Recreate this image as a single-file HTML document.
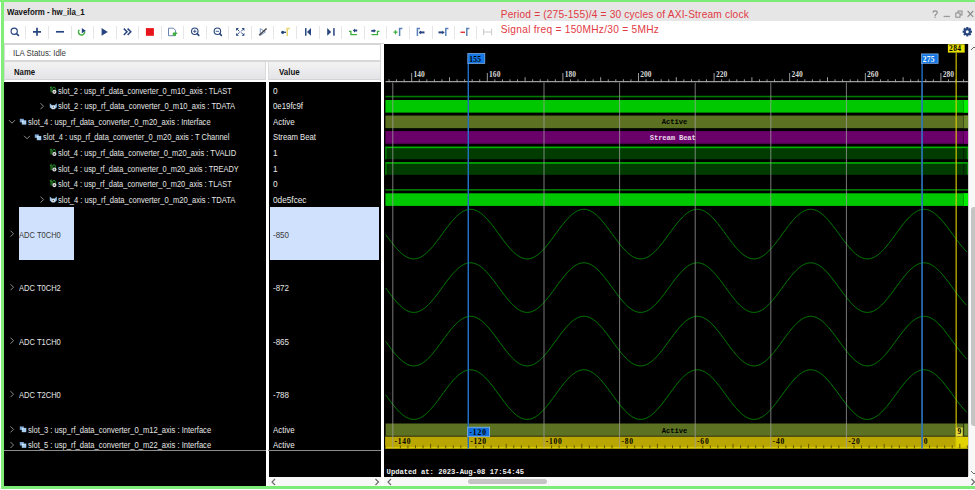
<!DOCTYPE html><html><head><meta charset="utf-8"><style>
*{margin:0;padding:0;box-sizing:border-box}
html,body{width:975px;height:490px;overflow:hidden;background:#fff;position:relative;font-family:"Liberation Sans",sans-serif}
.a{position:absolute}
.t{position:absolute;white-space:nowrap;line-height:1}
.nm{position:absolute;white-space:nowrap;line-height:1;color:#e6e6e6;font-size:7.9px;letter-spacing:-0.25px;word-spacing:-1px}
.vl{position:absolute;white-space:nowrap;line-height:1;color:#ececec;font-size:7.9px}
.mono{font-family:"Liberation Mono",monospace;font-weight:bold}
.sep{position:absolute;top:25.5px;width:1px;height:13px;background:#e6e6e6}
</style></head><body>
<div class="a" style="left:0;top:0;width:975px;height:2.1px;background:#7dec76"></div>
<div class="a" style="left:0.9px;top:0;width:3.1px;height:489px;background:#80ee78"></div>
<div class="a" style="left:0.9px;top:486px;width:975px;height:2.6px;background:#7dec76"></div>
<div class="a" style="left:4px;top:2.1px;width:971px;height:18.9px;background:#e6e6e6"></div>
<svg class="a" style="left:930px;top:9px" width="45" height="10" viewBox="0 0 45 10">
<path d="M2.9 3.6 Q3 1.9 5.1 1.9 Q7.2 1.9 7.2 3.7 Q7.2 4.9 5.8 5.5 Q5.1 5.9 5.1 6.9" fill="none" stroke="#8a8a8a" stroke-width="1.1"/><rect x="4.5" y="7.6" width="1.2" height="1.2" fill="#8a8a8a"/>
<rect x="13.6" y="6.8" width="6.4" height="1.3" fill="#9a9a9a"/>
<rect x="28" y="2" width="4" height="4" fill="none" stroke="#8a8a8a" stroke-width="1"/>
<rect x="25.8" y="4" width="4.2" height="4.2" fill="#e6e6e6" stroke="#8a8a8a" stroke-width="1"/>
<path d="M37.6 2 L43.2 7.8 M43.2 2 L37.6 7.8" stroke="#8a8a8a" stroke-width="1.1"/>
</svg>
<div class="sep" style="left:25.3px"></div>
<div class="sep" style="left:48.1px"></div>
<div class="sep" style="left:70.6px"></div>
<div class="sep" style="left:93.3px"></div>
<div class="sep" style="left:115.8px"></div>
<div class="sep" style="left:138.1px"></div>
<div class="sep" style="left:160.9px"></div>
<div class="sep" style="left:183.3px"></div>
<div class="sep" style="left:206.1px"></div>
<div class="sep" style="left:228.4px"></div>
<div class="sep" style="left:251.3px"></div>
<div class="sep" style="left:273.4px"></div>
<div class="sep" style="left:296.1px"></div>
<div class="sep" style="left:318.9px"></div>
<div class="sep" style="left:341.4px"></div>
<div class="sep" style="left:364.0px"></div>
<div class="sep" style="left:386.2px"></div>
<div class="sep" style="left:408.8px"></div>
<div class="sep" style="left:431.5px"></div>
<div class="sep" style="left:453.7px"></div>
<div class="sep" style="left:476.0px"></div>
<div class="a" style="left:4px;top:43px;width:380px;height:1.9px;background:#d6d6d6"></div>
<svg class="a" style="left:0;top:0" width="975" height="45"><circle cx="14.2" cy="31.2" r="3.1" fill="none" stroke="#27457f" stroke-width="1.15"/><path d="M16.4 33.5 L18.4 35.4" stroke="#27457f" stroke-width="1.7" stroke-linecap="round"/><path d="M33 31.8 H41 M37 27.8 V35.8" stroke="#27457f" stroke-width="1.7"/><path d="M56 31.8 H64" stroke="#27457f" stroke-width="1.7"/><path d="M79.3 29.8 A3.1 3.1 0 1 0 84.6 31.4" fill="none" stroke="#3cae3c" stroke-width="1.4"/><path d="M81.8 28 L85.8 30.7 L81.8 33.3 Z" fill="#27457f"/><path d="M101.6 28.1 L107.8 31.9 L101.6 35.7 Z" fill="#27457f"/><path d="M123.8 28.6 L127 31.8 L123.8 35 M127.6 28.6 L130.8 31.8 L127.6 35" fill="none" stroke="#27457f" stroke-width="1.5"/><rect x="145.9" y="28.1" width="8" height="7.7" fill="#e8141c"/><path d="M168.5 28.2 H173.5 L175.5 30.3 V35.7 H168.5 Z" fill="none" stroke="#5a78a8" stroke-width="0.9"/><path d="M172.5 34.3 L174.3 32.8 H176.6 L175.6 31.8 L177.6 33.3 L175.6 34.9 L176.6 34 H174.3 Z" fill="#3cae3c"/><rect x="172.8" y="32.6" width="3.2" height="3" fill="#3cae3c"/><circle cx="194.8" cy="31.3" r="3.25" fill="none" stroke="#27457f" stroke-width="1.1"/><path d="M193.1 31.3 H196.5 M194.8 29.6 V33" stroke="#27457f" stroke-width="0.85"/><path d="M197.2 33.7 L198.8 35.4" stroke="#27457f" stroke-width="1.6" stroke-linecap="round"/><circle cx="217.4" cy="31.3" r="3.25" fill="none" stroke="#27457f" stroke-width="1.1"/><path d="M215.7 31.3 H219.1" stroke="#27457f" stroke-width="0.85"/><path d="M219.8 33.7 L221.4 35.4" stroke="#27457f" stroke-width="1.6" stroke-linecap="round"/><path d="M237.2 29.2 L239.4 31.4 M243.3 29.2 L241.1 31.4 M237.2 34.6 L239.4 32.4 M243.3 34.6 L241.1 32.4" stroke="#27457f" stroke-width="1"/><path d="M236.1 28.1 H238.9 L236.1 30.9 Z M244.4 28.1 H241.6 L244.4 30.9 Z M236.1 35.7 H238.9 L236.1 32.9 Z M244.4 35.7 H241.6 L244.4 32.9 Z" fill="#27457f"/><path d="M260.3 28.6 L265.4 32 L260.3 35.4 Z" fill="none" stroke="#6f8fc0" stroke-width="0.9"/><path d="M259.2 35.3 L266.6 28.5" stroke="#444" stroke-width="1.4"/><circle cx="282.7" cy="32.3" r="1.6" fill="#27457f"/><path d="M283.5 32.3 H286" stroke="#27457f" stroke-width="1.3"/><path d="M287.2 36 V28.6 H289.8" fill="none" stroke="#e8d36a" stroke-width="1.5"/><rect x="305" y="28.1" width="1.5" height="7.6" fill="#27457f"/><path d="M311 28.1 L307 31.9 L311 35.7 Z" fill="#27457f"/><rect x="333.2" y="28.1" width="1.5" height="7.6" fill="#27457f"/><path d="M327.2 28.1 L331.2 31.9 L327.2 35.7 Z" fill="#27457f"/><path d="M349 31.3 H350.9 V34.7 H356.9" fill="none" stroke="#3cae3c" stroke-width="1.3"/><path d="M352.8 30.5 L355 28.6 V32.4 Z" fill="#27457f"/><rect x="354.5" y="29.6" width="2.7" height="1.9" fill="#27457f"/><path d="M371.5 34.7 H377.5 V31.3 H379.5" fill="none" stroke="#3cae3c" stroke-width="1.3"/><rect x="371.3" y="29.9" width="2.8" height="1.9" fill="#27457f"/><path d="M373.8 28.9 L376 30.85 L373.8 32.8 Z" fill="#27457f"/><path d="M393.5 32.2 H397.5 M395.5 30.2 V34.2" stroke="#3cae3c" stroke-width="1.3"/><path d="M399.6 36 V28.5 H402.4" fill="none" stroke="#5a82b8" stroke-width="1.5"/><path d="M417.4 36 V28.5 H420" fill="none" stroke="#5a82b8" stroke-width="1.5"/><path d="M419.5 32.4 H424.5" stroke="#27457f" stroke-width="2"/><path d="M421 30.6 L418.8 32.4 L421 34.2Z" fill="#27457f"/><path d="M438.5 32.4 H443" stroke="#27457f" stroke-width="2"/><path d="M442.4 30.6 L444.6 32.4 L442.4 34.2Z" fill="#27457f"/><path d="M445.8 36 V28.5 H448.4" fill="none" stroke="#5a82b8" stroke-width="1.5"/><path d="M460.5 32.3 H465" stroke="#e23a3a" stroke-width="1.5"/><path d="M466.8 36 V28.5 H469.4" fill="none" stroke="#5a82b8" stroke-width="1.5"/><path d="M483.6 28.8 V35.2 M491.6 28.8 V35.2 M483.6 32 H491.6" stroke="#c8c8c8" stroke-width="1"/><rect x="969.80" y="30.60" width="2.2" height="2.2" fill="#27457f" transform="rotate(0 970.90 31.70)"/><rect x="968.75" y="33.15" width="2.2" height="2.2" fill="#27457f" transform="rotate(45 969.85 34.25)"/><rect x="966.20" y="34.20" width="2.2" height="2.2" fill="#27457f" transform="rotate(90 967.30 35.30)"/><rect x="963.65" y="33.15" width="2.2" height="2.2" fill="#27457f" transform="rotate(135 964.75 34.25)"/><rect x="962.60" y="30.60" width="2.2" height="2.2" fill="#27457f" transform="rotate(180 963.70 31.70)"/><rect x="963.65" y="28.05" width="2.2" height="2.2" fill="#27457f" transform="rotate(225 964.75 29.15)"/><rect x="966.20" y="27.00" width="2.2" height="2.2" fill="#27457f" transform="rotate(270 967.30 28.10)"/><rect x="968.75" y="28.05" width="2.2" height="2.2" fill="#27457f" transform="rotate(315 969.85 29.15)"/><circle cx="967.3" cy="31.7" r="2.5" fill="none" stroke="#27457f" stroke-width="2"/></svg>
<div class="a" style="left:4px;top:44.9px;width:377px;height:14.8px;background:#fff"></div>
<div class="a" style="left:4px;top:59.7px;width:377px;height:2px;background:#d8d8d8"></div>
<div class="a" style="left:4px;top:61.7px;width:376.5px;height:18.7px;background:linear-gradient(#f3f3f3,#e4e4e8);border-bottom:0.8px solid #d4d4d4"></div>
<div class="a" style="left:265px;top:61.7px;width:0.8px;height:18.7px;background:#dadada"></div>
<div class="a" style="left:265.8px;top:61.7px;width:2.6px;height:19.3px;background:#fff"></div>
<div class="a" style="left:268.4px;top:61.7px;width:0.9px;height:18.7px;background:#dcdcdc"></div>
<div class="a" style="left:380px;top:44.6px;width:0.9px;height:36px;background:#d8d8d8"></div>
<div class="a" style="left:4.1px;top:44.6px;width:0.9px;height:36px;background:#d8d8d8"></div>
<div class="a" style="left:4px;top:81.5px;width:261.6px;height:404.5px;background:#000"></div>
<div class="a" style="left:268.6px;top:81.5px;width:112.2px;height:395.1px;background:#000"></div>
<div class="a" style="left:268.4px;top:476.6px;width:112.6px;height:9.4px;background:#f8f8f8"></div>
<svg class="a" style="left:268px;top:476px" width="115" height="10"><path d="M7 3 L4 6 L7 9" fill="none" stroke="#666" stroke-width="1.1"/><path d="M107.5 3 L110.5 6 L107.5 9" fill="none" stroke="#666" stroke-width="1.1"/></svg>
<div class="a" style="left:381px;top:44px;width:3px;height:442px;background:#fff"></div>
<div class="a" style="left:19px;top:206.95px;width:55px;height:52.9px;background:#cfe1fc"></div>
<div class="a" style="left:270px;top:206.95px;width:109px;height:52.9px;background:#cfe1fc"></div>
<div class="a" style="left:4px;top:449.5px;width:261.8px;height:1px;background:#8c8c8c"></div>
<div class="a" style="left:268.4px;top:449.5px;width:112.6px;height:1px;background:#8c8c8c"></div>
<svg class="a" style="left:0;top:0" width="381" height="490"><path d="M50.1 87.9 L51.1 87.1 V92.3" fill="none" stroke="#2fa02f" stroke-width="1.1"/><rect x="52.7" y="87.2" width="2.6" height="3.6" rx="1.2" fill="none" stroke="#2fa02f" stroke-width="0.9"/><circle cx="54.4" cy="91.8" r="2.1" fill="#e6e6e6"/><circle cx="54.4" cy="91.8" r="0.9" fill="#666"/><path d="M40.5 103.2 L43.5 106.2 L40.5 109.2" fill="none" stroke="#9a9a9a" stroke-width="0.9"/><path d="M49.8 103.2 L52.0 105.2 H54.6 L56.8 103.2 V107.2 L54.6 109.2 H52.0 L49.8 107.2 Z" fill="#9cc4ea"/><circle cx="53.3" cy="107.2" r="1.7" fill="#e8e8e8"/><circle cx="53.3" cy="107.2" r="0.7" fill="#555"/><path d="M9.0 120.2 L12.0 123.2 L15.0 120.2" fill="none" stroke="#9a9a9a" stroke-width="0.9"/><rect x="19.8" y="118.8" width="4" height="3.5" fill="#7fa8d8"/><rect x="21.8" y="120.3" width="4.5" height="4.3" fill="#a9cdf0"/><rect x="22.1" y="120.8" width="1.2" height="1" fill="#fff"/><path d="M24.0 135.8 L27.0 138.8 L30.0 135.8" fill="none" stroke="#9a9a9a" stroke-width="0.9"/><rect x="34.8" y="134.4" width="4" height="3.5" fill="#7fa8d8"/><rect x="36.8" y="135.9" width="4.5" height="4.3" fill="#a9cdf0"/><rect x="37.1" y="136.4" width="1.2" height="1" fill="#fff"/><path d="M50.1 150.1 L51.1 149.3 V154.5" fill="none" stroke="#2fa02f" stroke-width="1.1"/><rect x="52.7" y="149.4" width="2.6" height="3.6" rx="1.2" fill="none" stroke="#2fa02f" stroke-width="0.9"/><circle cx="54.4" cy="154.0" r="2.1" fill="#e6e6e6"/><circle cx="54.4" cy="154.0" r="0.9" fill="#666"/><path d="M50.1 165.6 L51.1 164.8 V170.0" fill="none" stroke="#2fa02f" stroke-width="1.1"/><rect x="52.7" y="164.9" width="2.6" height="3.6" rx="1.2" fill="none" stroke="#2fa02f" stroke-width="0.9"/><circle cx="54.4" cy="169.5" r="2.1" fill="#e6e6e6"/><circle cx="54.4" cy="169.5" r="0.9" fill="#666"/><path d="M50.1 181.2 L51.1 180.4 V185.6" fill="none" stroke="#2fa02f" stroke-width="1.1"/><rect x="52.7" y="180.5" width="2.6" height="3.6" rx="1.2" fill="none" stroke="#2fa02f" stroke-width="0.9"/><circle cx="54.4" cy="185.1" r="2.1" fill="#e6e6e6"/><circle cx="54.4" cy="185.1" r="0.9" fill="#666"/><path d="M40.5 196.6 L43.5 199.6 L40.5 202.6" fill="none" stroke="#9a9a9a" stroke-width="0.9"/><path d="M49.8 196.6 L52.0 198.6 H54.6 L56.8 196.6 V200.6 L54.6 202.6 H52.0 L49.8 200.6 Z" fill="#9cc4ea"/><circle cx="53.3" cy="200.5" r="1.7" fill="#e8e8e8"/><circle cx="53.3" cy="200.5" r="0.7" fill="#555"/><path d="M10.5 230.7 L13.5 233.7 L10.5 236.7" fill="none" stroke="#9a9a9a" stroke-width="0.9"/><path d="M10.5 284.2 L13.5 287.2 L10.5 290.2" fill="none" stroke="#9a9a9a" stroke-width="0.9"/><path d="M10.5 337.7 L13.5 340.7 L10.5 343.7" fill="none" stroke="#9a9a9a" stroke-width="0.9"/><path d="M10.5 391.2 L13.5 394.2 L10.5 397.2" fill="none" stroke="#9a9a9a" stroke-width="0.9"/><path d="M10.5 426.4 L13.5 429.4 L10.5 432.4" fill="none" stroke="#9a9a9a" stroke-width="0.9"/><rect x="19.8" y="426.4" width="4" height="3.5" fill="#7fa8d8"/><rect x="21.8" y="427.9" width="4.5" height="4.3" fill="#a9cdf0"/><rect x="22.1" y="428.4" width="1.2" height="1" fill="#fff"/><path d="M10.5 442.0 L13.5 445.0 L10.5 448.0" fill="none" stroke="#9a9a9a" stroke-width="0.9"/><rect x="19.8" y="442.0" width="4" height="3.5" fill="#7fa8d8"/><rect x="21.8" y="443.5" width="4.5" height="4.3" fill="#a9cdf0"/><rect x="22.1" y="444.0" width="1.2" height="1" fill="#fff"/></svg>
<div class="a" style="left:384px;top:44px;width:584.2px;height:432.6px;background:#000"></div>
<svg class="a" style="left:0;top:0" width="975" height="490"><rect x="385.5" y="81.1" width="582.5" height="1.1" fill="#b0b0b0"/><rect x="388.57" y="79.3" width="0.9" height="2.9" fill="#a8a8a8"/><rect x="396.13" y="79.3" width="0.9" height="2.9" fill="#a8a8a8"/><rect x="403.69" y="79.3" width="0.9" height="2.9" fill="#a8a8a8"/><rect x="411.25" y="73" width="0.9" height="9.2" fill="#a8a8a8"/><rect x="418.81" y="79.3" width="0.9" height="2.9" fill="#a8a8a8"/><rect x="426.37" y="79.3" width="0.9" height="2.9" fill="#a8a8a8"/><rect x="433.93" y="79.3" width="0.9" height="2.9" fill="#a8a8a8"/><rect x="441.49" y="79.3" width="0.9" height="2.9" fill="#a8a8a8"/><rect x="449.05" y="77.2" width="0.9" height="5.0" fill="#a8a8a8"/><rect x="456.61" y="79.3" width="0.9" height="2.9" fill="#a8a8a8"/><rect x="464.17" y="79.3" width="0.9" height="2.9" fill="#a8a8a8"/><rect x="471.73" y="79.3" width="0.9" height="2.9" fill="#a8a8a8"/><rect x="479.29" y="79.3" width="0.9" height="2.9" fill="#a8a8a8"/><rect x="486.85" y="73" width="0.9" height="9.2" fill="#a8a8a8"/><rect x="494.41" y="79.3" width="0.9" height="2.9" fill="#a8a8a8"/><rect x="501.97" y="79.3" width="0.9" height="2.9" fill="#a8a8a8"/><rect x="509.53" y="79.3" width="0.9" height="2.9" fill="#a8a8a8"/><rect x="517.09" y="79.3" width="0.9" height="2.9" fill="#a8a8a8"/><rect x="524.65" y="77.2" width="0.9" height="5.0" fill="#a8a8a8"/><rect x="532.21" y="79.3" width="0.9" height="2.9" fill="#a8a8a8"/><rect x="539.77" y="79.3" width="0.9" height="2.9" fill="#a8a8a8"/><rect x="547.33" y="79.3" width="0.9" height="2.9" fill="#a8a8a8"/><rect x="554.89" y="79.3" width="0.9" height="2.9" fill="#a8a8a8"/><rect x="562.45" y="73" width="0.9" height="9.2" fill="#a8a8a8"/><rect x="570.01" y="79.3" width="0.9" height="2.9" fill="#a8a8a8"/><rect x="577.57" y="79.3" width="0.9" height="2.9" fill="#a8a8a8"/><rect x="585.13" y="79.3" width="0.9" height="2.9" fill="#a8a8a8"/><rect x="592.69" y="79.3" width="0.9" height="2.9" fill="#a8a8a8"/><rect x="600.25" y="77.2" width="0.9" height="5.0" fill="#a8a8a8"/><rect x="607.81" y="79.3" width="0.9" height="2.9" fill="#a8a8a8"/><rect x="615.37" y="79.3" width="0.9" height="2.9" fill="#a8a8a8"/><rect x="622.93" y="79.3" width="0.9" height="2.9" fill="#a8a8a8"/><rect x="630.49" y="79.3" width="0.9" height="2.9" fill="#a8a8a8"/><rect x="638.05" y="73" width="0.9" height="9.2" fill="#a8a8a8"/><rect x="645.61" y="79.3" width="0.9" height="2.9" fill="#a8a8a8"/><rect x="653.17" y="79.3" width="0.9" height="2.9" fill="#a8a8a8"/><rect x="660.73" y="79.3" width="0.9" height="2.9" fill="#a8a8a8"/><rect x="668.29" y="79.3" width="0.9" height="2.9" fill="#a8a8a8"/><rect x="675.85" y="77.2" width="0.9" height="5.0" fill="#a8a8a8"/><rect x="683.41" y="79.3" width="0.9" height="2.9" fill="#a8a8a8"/><rect x="690.97" y="79.3" width="0.9" height="2.9" fill="#a8a8a8"/><rect x="698.53" y="79.3" width="0.9" height="2.9" fill="#a8a8a8"/><rect x="706.09" y="79.3" width="0.9" height="2.9" fill="#a8a8a8"/><rect x="713.65" y="73" width="0.9" height="9.2" fill="#a8a8a8"/><rect x="721.21" y="79.3" width="0.9" height="2.9" fill="#a8a8a8"/><rect x="728.77" y="79.3" width="0.9" height="2.9" fill="#a8a8a8"/><rect x="736.33" y="79.3" width="0.9" height="2.9" fill="#a8a8a8"/><rect x="743.89" y="79.3" width="0.9" height="2.9" fill="#a8a8a8"/><rect x="751.45" y="77.2" width="0.9" height="5.0" fill="#a8a8a8"/><rect x="759.01" y="79.3" width="0.9" height="2.9" fill="#a8a8a8"/><rect x="766.57" y="79.3" width="0.9" height="2.9" fill="#a8a8a8"/><rect x="774.13" y="79.3" width="0.9" height="2.9" fill="#a8a8a8"/><rect x="781.69" y="79.3" width="0.9" height="2.9" fill="#a8a8a8"/><rect x="789.25" y="73" width="0.9" height="9.2" fill="#a8a8a8"/><rect x="796.81" y="79.3" width="0.9" height="2.9" fill="#a8a8a8"/><rect x="804.37" y="79.3" width="0.9" height="2.9" fill="#a8a8a8"/><rect x="811.93" y="79.3" width="0.9" height="2.9" fill="#a8a8a8"/><rect x="819.49" y="79.3" width="0.9" height="2.9" fill="#a8a8a8"/><rect x="827.05" y="77.2" width="0.9" height="5.0" fill="#a8a8a8"/><rect x="834.61" y="79.3" width="0.9" height="2.9" fill="#a8a8a8"/><rect x="842.17" y="79.3" width="0.9" height="2.9" fill="#a8a8a8"/><rect x="849.73" y="79.3" width="0.9" height="2.9" fill="#a8a8a8"/><rect x="857.29" y="79.3" width="0.9" height="2.9" fill="#a8a8a8"/><rect x="864.85" y="73" width="0.9" height="9.2" fill="#a8a8a8"/><rect x="872.41" y="79.3" width="0.9" height="2.9" fill="#a8a8a8"/><rect x="879.97" y="79.3" width="0.9" height="2.9" fill="#a8a8a8"/><rect x="887.53" y="79.3" width="0.9" height="2.9" fill="#a8a8a8"/><rect x="895.09" y="79.3" width="0.9" height="2.9" fill="#a8a8a8"/><rect x="902.65" y="77.2" width="0.9" height="5.0" fill="#a8a8a8"/><rect x="910.21" y="79.3" width="0.9" height="2.9" fill="#a8a8a8"/><rect x="917.77" y="79.3" width="0.9" height="2.9" fill="#a8a8a8"/><rect x="925.33" y="79.3" width="0.9" height="2.9" fill="#a8a8a8"/><rect x="932.89" y="79.3" width="0.9" height="2.9" fill="#a8a8a8"/><rect x="940.45" y="73" width="0.9" height="9.2" fill="#a8a8a8"/><rect x="948.01" y="79.3" width="0.9" height="2.9" fill="#a8a8a8"/><rect x="955.57" y="79.3" width="0.9" height="2.9" fill="#a8a8a8"/><rect x="963.13" y="79.3" width="0.9" height="2.9" fill="#a8a8a8"/><rect x="385.4" y="95.75" width="582.7" height="1.6" fill="#007a00"/><rect x="385.4" y="100.00" width="582.70" height="12.6" fill="#00c800"/><rect x="964.0" y="100.00" width="4.10" height="12.6" fill="#00f000"/><rect x="963.0" y="100.00" width="1.00" height="12.6" fill="#00a400"/><rect x="385.4" y="115.55" width="582.70" height="12.6" fill="#5c7222"/><rect x="964.0" y="115.55" width="4.10" height="12.6" fill="#6e8a2e"/><rect x="963.0" y="115.55" width="1.00" height="12.6" fill="#3e4e16"/><rect x="385.4" y="131.10" width="582.70" height="12.6" fill="#6a006a"/><rect x="964.0" y="131.10" width="4.10" height="12.6" fill="#7c007c"/><rect x="963.0" y="131.10" width="1.00" height="12.6" fill="#480048"/><rect x="385.4" y="146.65" width="582.7" height="12.6" fill="#003c00"/><rect x="385.4" y="146.65" width="582.7" height="1.5" fill="#00b400"/><rect x="385.4" y="146.65" width="1" height="12.6" fill="#00a000"/><rect x="963.0" y="148.15" width="1" height="11.1" fill="#002400"/><rect x="966.9" y="146.65" width="0.9" height="12.6" fill="#009000"/><rect x="385.4" y="162.20" width="582.7" height="12.6" fill="#003c00"/><rect x="385.4" y="162.20" width="582.7" height="1.5" fill="#00b400"/><rect x="385.4" y="162.20" width="1" height="12.6" fill="#00a000"/><rect x="963.0" y="163.70" width="1" height="11.1" fill="#002400"/><rect x="966.9" y="162.20" width="0.9" height="12.6" fill="#009000"/><rect x="385.4" y="189.05" width="582.7" height="1.6" fill="#007a00"/><rect x="385.4" y="193.30" width="582.70" height="12.6" fill="#00c800"/><rect x="964.0" y="193.30" width="4.10" height="12.6" fill="#00f000"/><rect x="963.0" y="193.30" width="1.00" height="12.6" fill="#00a400"/><polyline points="385.7,234.44 386.7,235.82 387.7,237.18 388.7,238.54 389.7,239.89 390.7,241.21 391.7,242.52 392.7,243.80 393.7,245.05 394.7,246.26 395.7,247.44 396.7,248.58 397.7,249.67 398.7,250.71 399.7,251.71 400.7,252.65 401.7,253.53 402.7,254.36 403.7,255.12 404.7,255.81 405.7,256.44 406.7,257.01 407.7,257.50 408.7,257.92 409.7,258.26 410.7,258.54 411.7,258.73 412.7,258.85 413.7,258.90 414.7,258.87 415.7,258.76 416.7,258.58 417.7,258.32 418.7,257.99 419.7,257.59 420.7,257.11 421.7,256.56 422.7,255.95 423.7,255.26 424.7,254.51 425.7,253.70 426.7,252.83 427.7,251.90 428.7,250.92 429.7,249.88 430.7,248.80 431.7,247.67 432.7,246.50 433.7,245.29 434.7,244.05 435.7,242.78 436.7,241.48 437.7,240.15 438.7,238.81 439.7,237.46 440.7,236.09 441.7,234.72 442.7,233.34 443.7,231.97 444.7,230.61 445.7,229.25 446.7,227.91 447.7,226.59 448.7,225.30 449.7,224.03 450.7,222.79 451.7,221.58 452.7,220.41 453.7,219.29 454.7,218.21 455.7,217.18 456.7,216.20 457.7,215.28 458.7,214.41 459.7,213.61 460.7,212.87 461.7,212.19 462.7,211.58 463.7,211.04 464.7,210.57 465.7,210.17 466.7,209.85 467.7,209.60 468.7,209.42 469.7,209.32 470.7,209.30 471.7,209.35 472.7,209.48 473.7,209.69 474.7,209.97 475.7,210.32 476.7,210.75 477.7,211.25 478.7,211.82 479.7,212.45 480.7,213.16 481.7,213.92 482.7,214.75 483.7,215.64 484.7,216.59 485.7,217.59 486.7,218.64 487.7,219.73 488.7,220.88 489.7,222.06 490.7,223.28 491.7,224.53 492.7,225.81 493.7,227.12 494.7,228.45 495.7,229.79 496.7,231.15 497.7,232.52 498.7,233.89 499.7,235.27 500.7,236.64 501.7,238.00 502.7,239.35 503.7,240.68 504.7,242.00 505.7,243.29 506.7,244.55 507.7,245.78 508.7,246.97 509.7,248.13 510.7,249.24 511.7,250.30 512.7,251.32 513.7,252.28 514.7,253.19 515.7,254.03 516.7,254.82 517.7,255.54 518.7,256.20 519.7,256.79 520.7,257.31 521.7,257.76 522.7,258.13 523.7,258.44 524.7,258.66 525.7,258.81 526.7,258.89 527.7,258.89 528.7,258.81 529.7,258.66 530.7,258.44 531.7,258.13 532.7,257.76 533.7,257.31 534.7,256.79 535.7,256.20 536.7,255.54 537.7,254.82 538.7,254.03 539.7,253.19 540.7,252.28 541.7,251.32 542.7,250.30 543.7,249.24 544.7,248.13 545.7,246.97 546.7,245.78 547.7,244.55 548.7,243.29 549.7,242.00 550.7,240.68 551.7,239.35 552.7,238.00 553.7,236.64 554.7,235.27 555.7,233.89 556.7,232.52 557.7,231.15 558.7,229.79 559.7,228.45 560.7,227.12 561.7,225.81 562.7,224.53 563.7,223.28 564.7,222.06 565.7,220.88 566.7,219.73 567.7,218.64 568.7,217.59 569.7,216.59 570.7,215.64 571.7,214.75 572.7,213.92 573.7,213.16 574.7,212.45 575.7,211.82 576.7,211.25 577.7,210.75 578.7,210.32 579.7,209.97 580.7,209.69 581.7,209.48 582.7,209.35 583.7,209.30 584.7,209.32 585.7,209.42 586.7,209.60 587.7,209.85 588.7,210.17 589.7,210.57 590.7,211.04 591.7,211.58 592.7,212.19 593.7,212.87 594.7,213.61 595.7,214.41 596.7,215.28 597.7,216.20 598.7,217.18 599.7,218.21 600.7,219.29 601.7,220.41 602.7,221.58 603.7,222.79 604.7,224.03 605.7,225.30 606.7,226.59 607.7,227.91 608.7,229.25 609.7,230.61 610.7,231.97 611.7,233.34 612.7,234.72 613.7,236.09 614.7,237.46 615.7,238.81 616.7,240.15 617.7,241.48 618.7,242.78 619.7,244.05 620.7,245.29 621.7,246.50 622.7,247.67 623.7,248.80 624.7,249.88 625.7,250.92 626.7,251.90 627.7,252.83 628.7,253.70 629.7,254.51 630.7,255.26 631.7,255.95 632.7,256.56 633.7,257.11 634.7,257.59 635.7,257.99 636.7,258.32 637.7,258.58 638.7,258.76 639.7,258.87 640.7,258.90 641.7,258.85 642.7,258.73 643.7,258.54 644.7,258.26 645.7,257.92 646.7,257.50 647.7,257.01 648.7,256.44 649.7,255.81 650.7,255.12 651.7,254.36 652.7,253.53 653.7,252.65 654.7,251.71 655.7,250.71 656.7,249.67 657.7,248.58 658.7,247.44 659.7,246.26 660.7,245.05 661.7,243.80 662.7,242.52 663.7,241.21 664.7,239.89 665.7,238.54 666.7,237.18 667.7,235.82 668.7,234.44 669.7,233.07 670.7,231.70 671.7,230.34 672.7,228.98 673.7,227.65 674.7,226.33 675.7,225.04 676.7,223.77 677.7,222.54 678.7,221.34 679.7,220.19 680.7,219.07 681.7,218.00 682.7,216.98 683.7,216.01 684.7,215.10 685.7,214.25 686.7,213.46 687.7,212.73 688.7,212.06 689.7,211.47 690.7,210.94 691.7,210.48 692.7,210.10 693.7,209.79 694.7,209.56 695.7,209.40 696.7,209.31 697.7,209.31 698.7,209.37 699.7,209.52 700.7,209.74 701.7,210.03 702.7,210.40 703.7,210.84 704.7,211.36 705.7,211.94 706.7,212.59 707.7,213.30 708.7,214.08 709.7,214.93 710.7,215.83 711.7,216.78 712.7,217.79 713.7,218.85 714.7,219.96 715.7,221.11 716.7,222.30 717.7,223.53 718.7,224.78 719.7,226.07 720.7,227.38 721.7,228.72 722.7,230.06 723.7,231.43 724.7,232.80 725.7,234.17 726.7,235.54 727.7,236.91 728.7,238.27 729.7,239.62 730.7,240.95 731.7,242.26 732.7,243.54 733.7,244.80 734.7,246.02 735.7,247.21 736.7,248.35 737.7,249.45 738.7,250.51 739.7,251.51 740.7,252.47 741.7,253.36 742.7,254.20 743.7,254.97 744.7,255.68 745.7,256.32 746.7,256.90 747.7,257.40 748.7,257.84 749.7,258.20 750.7,258.49 751.7,258.70 752.7,258.84 753.7,258.90 754.7,258.88 755.7,258.79 756.7,258.62 757.7,258.38 758.7,258.06 759.7,257.67 760.7,257.21 761.7,256.68 762.7,256.07 763.7,255.40 764.7,254.67 765.7,253.87 766.7,253.01 767.7,252.09 768.7,251.12 769.7,250.09 770.7,249.02 771.7,247.90 772.7,246.74 773.7,245.54 774.7,244.30 775.7,243.03 776.7,241.74 777.7,240.42 778.7,239.08 779.7,237.73 780.7,236.36 781.7,234.99 782.7,233.62 783.7,232.25 784.7,230.88 785.7,229.52 786.7,228.18 787.7,226.86 788.7,225.55 789.7,224.28 790.7,223.03 791.7,221.82 792.7,220.64 793.7,219.51 794.7,218.42 795.7,217.38 796.7,216.39 797.7,215.46 798.7,214.58 799.7,213.77 800.7,213.01 801.7,212.32 802.7,211.70 803.7,211.14 804.7,210.66 805.7,210.25 806.7,209.91 807.7,209.64 808.7,209.45 809.7,209.34 810.7,209.30 811.7,209.34 812.7,209.45 813.7,209.64 814.7,209.91 815.7,210.25 816.7,210.66 817.7,211.14 818.7,211.70 819.7,212.32 820.7,213.01 821.7,213.77 822.7,214.58 823.7,215.46 824.7,216.39 825.7,217.38 826.7,218.42 827.7,219.51 828.7,220.64 829.7,221.82 830.7,223.03 831.7,224.28 832.7,225.55 833.7,226.86 834.7,228.18 835.7,229.52 836.7,230.88 837.7,232.25 838.7,233.62 839.7,234.99 840.7,236.36 841.7,237.73 842.7,239.08 843.7,240.42 844.7,241.74 845.7,243.03 846.7,244.30 847.7,245.54 848.7,246.74 849.7,247.90 850.7,249.02 851.7,250.09 852.7,251.12 853.7,252.09 854.7,253.01 855.7,253.87 856.7,254.67 857.7,255.40 858.7,256.07 859.7,256.68 860.7,257.21 861.7,257.67 862.7,258.06 863.7,258.38 864.7,258.62 865.7,258.79 866.7,258.88 867.7,258.90 868.7,258.84 869.7,258.70 870.7,258.49 871.7,258.20 872.7,257.84 873.7,257.40 874.7,256.90 875.7,256.32 876.7,255.68 877.7,254.97 878.7,254.20 879.7,253.36 880.7,252.47 881.7,251.51 882.7,250.51 883.7,249.45 884.7,248.35 885.7,247.21 886.7,246.02 887.7,244.80 888.7,243.54 889.7,242.26 890.7,240.95 891.7,239.62 892.7,238.27 893.7,236.91 894.7,235.54 895.7,234.17 896.7,232.80 897.7,231.43 898.7,230.06 899.7,228.72 900.7,227.38 901.7,226.07 902.7,224.78 903.7,223.53 904.7,222.30 905.7,221.11 906.7,219.96 907.7,218.85 908.7,217.79 909.7,216.78 910.7,215.83 911.7,214.93 912.7,214.08 913.7,213.30 914.7,212.59 915.7,211.94 916.7,211.36 917.7,210.84 918.7,210.40 919.7,210.03 920.7,209.74 921.7,209.52 922.7,209.37 923.7,209.31 924.7,209.31 925.7,209.40 926.7,209.56 927.7,209.79 928.7,210.10 929.7,210.48 930.7,210.94 931.7,211.47 932.7,212.06 933.7,212.73 934.7,213.46 935.7,214.25 936.7,215.10 937.7,216.01 938.7,216.98 939.7,218.00 940.7,219.07 941.7,220.19 942.7,221.34 943.7,222.54 944.7,223.77 945.7,225.04 946.7,226.33 947.7,227.65 948.7,228.98 949.7,230.34 950.7,231.70 951.7,233.07 952.7,234.44 953.7,235.82 954.7,237.18 955.7,238.54 956.7,239.89 957.7,241.21 958.7,242.52 959.7,243.80 960.7,245.05 961.7,246.26 962.7,247.44 963.7,248.58 964.7,249.67 965.7,250.71 966.7,251.71" fill="none" stroke="#008800" stroke-width="0.95"/><polyline points="385.7,287.94 386.7,289.32 387.7,290.68 388.7,292.04 389.7,293.39 390.7,294.71 391.7,296.02 392.7,297.30 393.7,298.55 394.7,299.76 395.7,300.94 396.7,302.08 397.7,303.17 398.7,304.21 399.7,305.21 400.7,306.15 401.7,307.03 402.7,307.86 403.7,308.62 404.7,309.31 405.7,309.94 406.7,310.51 407.7,311.00 408.7,311.42 409.7,311.76 410.7,312.04 411.7,312.23 412.7,312.35 413.7,312.40 414.7,312.37 415.7,312.26 416.7,312.08 417.7,311.82 418.7,311.49 419.7,311.09 420.7,310.61 421.7,310.06 422.7,309.45 423.7,308.76 424.7,308.01 425.7,307.20 426.7,306.33 427.7,305.40 428.7,304.42 429.7,303.38 430.7,302.30 431.7,301.17 432.7,300.00 433.7,298.79 434.7,297.55 435.7,296.28 436.7,294.98 437.7,293.65 438.7,292.31 439.7,290.96 440.7,289.59 441.7,288.22 442.7,286.84 443.7,285.47 444.7,284.11 445.7,282.75 446.7,281.41 447.7,280.09 448.7,278.80 449.7,277.53 450.7,276.29 451.7,275.08 452.7,273.91 453.7,272.79 454.7,271.71 455.7,270.68 456.7,269.70 457.7,268.78 458.7,267.91 459.7,267.11 460.7,266.37 461.7,265.69 462.7,265.08 463.7,264.54 464.7,264.07 465.7,263.67 466.7,263.35 467.7,263.10 468.7,262.92 469.7,262.82 470.7,262.80 471.7,262.85 472.7,262.98 473.7,263.19 474.7,263.47 475.7,263.82 476.7,264.25 477.7,264.75 478.7,265.32 479.7,265.95 480.7,266.66 481.7,267.42 482.7,268.25 483.7,269.14 484.7,270.09 485.7,271.09 486.7,272.14 487.7,273.23 488.7,274.38 489.7,275.56 490.7,276.78 491.7,278.03 492.7,279.31 493.7,280.62 494.7,281.95 495.7,283.29 496.7,284.65 497.7,286.02 498.7,287.39 499.7,288.77 500.7,290.14 501.7,291.50 502.7,292.85 503.7,294.18 504.7,295.50 505.7,296.79 506.7,298.05 507.7,299.28 508.7,300.47 509.7,301.63 510.7,302.74 511.7,303.80 512.7,304.82 513.7,305.78 514.7,306.69 515.7,307.53 516.7,308.32 517.7,309.04 518.7,309.70 519.7,310.29 520.7,310.81 521.7,311.26 522.7,311.63 523.7,311.94 524.7,312.16 525.7,312.31 526.7,312.39 527.7,312.39 528.7,312.31 529.7,312.16 530.7,311.94 531.7,311.63 532.7,311.26 533.7,310.81 534.7,310.29 535.7,309.70 536.7,309.04 537.7,308.32 538.7,307.53 539.7,306.69 540.7,305.78 541.7,304.82 542.7,303.80 543.7,302.74 544.7,301.63 545.7,300.47 546.7,299.28 547.7,298.05 548.7,296.79 549.7,295.50 550.7,294.18 551.7,292.85 552.7,291.50 553.7,290.14 554.7,288.77 555.7,287.39 556.7,286.02 557.7,284.65 558.7,283.29 559.7,281.95 560.7,280.62 561.7,279.31 562.7,278.03 563.7,276.78 564.7,275.56 565.7,274.38 566.7,273.23 567.7,272.14 568.7,271.09 569.7,270.09 570.7,269.14 571.7,268.25 572.7,267.42 573.7,266.66 574.7,265.95 575.7,265.32 576.7,264.75 577.7,264.25 578.7,263.82 579.7,263.47 580.7,263.19 581.7,262.98 582.7,262.85 583.7,262.80 584.7,262.82 585.7,262.92 586.7,263.10 587.7,263.35 588.7,263.67 589.7,264.07 590.7,264.54 591.7,265.08 592.7,265.69 593.7,266.37 594.7,267.11 595.7,267.91 596.7,268.78 597.7,269.70 598.7,270.68 599.7,271.71 600.7,272.79 601.7,273.91 602.7,275.08 603.7,276.29 604.7,277.53 605.7,278.80 606.7,280.09 607.7,281.41 608.7,282.75 609.7,284.11 610.7,285.47 611.7,286.84 612.7,288.22 613.7,289.59 614.7,290.96 615.7,292.31 616.7,293.65 617.7,294.98 618.7,296.28 619.7,297.55 620.7,298.79 621.7,300.00 622.7,301.17 623.7,302.30 624.7,303.38 625.7,304.42 626.7,305.40 627.7,306.33 628.7,307.20 629.7,308.01 630.7,308.76 631.7,309.45 632.7,310.06 633.7,310.61 634.7,311.09 635.7,311.49 636.7,311.82 637.7,312.08 638.7,312.26 639.7,312.37 640.7,312.40 641.7,312.35 642.7,312.23 643.7,312.04 644.7,311.76 645.7,311.42 646.7,311.00 647.7,310.51 648.7,309.94 649.7,309.31 650.7,308.62 651.7,307.86 652.7,307.03 653.7,306.15 654.7,305.21 655.7,304.21 656.7,303.17 657.7,302.08 658.7,300.94 659.7,299.76 660.7,298.55 661.7,297.30 662.7,296.02 663.7,294.71 664.7,293.39 665.7,292.04 666.7,290.68 667.7,289.32 668.7,287.94 669.7,286.57 670.7,285.20 671.7,283.84 672.7,282.48 673.7,281.15 674.7,279.83 675.7,278.54 676.7,277.27 677.7,276.04 678.7,274.84 679.7,273.69 680.7,272.57 681.7,271.50 682.7,270.48 683.7,269.51 684.7,268.60 685.7,267.75 686.7,266.96 687.7,266.23 688.7,265.56 689.7,264.97 690.7,264.44 691.7,263.98 692.7,263.60 693.7,263.29 694.7,263.06 695.7,262.90 696.7,262.81 697.7,262.81 698.7,262.87 699.7,263.02 700.7,263.24 701.7,263.53 702.7,263.90 703.7,264.34 704.7,264.86 705.7,265.44 706.7,266.09 707.7,266.80 708.7,267.58 709.7,268.43 710.7,269.33 711.7,270.28 712.7,271.29 713.7,272.35 714.7,273.46 715.7,274.61 716.7,275.80 717.7,277.03 718.7,278.28 719.7,279.57 720.7,280.88 721.7,282.22 722.7,283.56 723.7,284.93 724.7,286.30 725.7,287.67 726.7,289.04 727.7,290.41 728.7,291.77 729.7,293.12 730.7,294.45 731.7,295.76 732.7,297.04 733.7,298.30 734.7,299.52 735.7,300.71 736.7,301.85 737.7,302.95 738.7,304.01 739.7,305.01 740.7,305.97 741.7,306.86 742.7,307.70 743.7,308.47 744.7,309.18 745.7,309.82 746.7,310.40 747.7,310.90 748.7,311.34 749.7,311.70 750.7,311.99 751.7,312.20 752.7,312.34 753.7,312.40 754.7,312.38 755.7,312.29 756.7,312.12 757.7,311.88 758.7,311.56 759.7,311.17 760.7,310.71 761.7,310.18 762.7,309.57 763.7,308.90 764.7,308.17 765.7,307.37 766.7,306.51 767.7,305.59 768.7,304.62 769.7,303.59 770.7,302.52 771.7,301.40 772.7,300.24 773.7,299.04 774.7,297.80 775.7,296.53 776.7,295.24 777.7,293.92 778.7,292.58 779.7,291.23 780.7,289.86 781.7,288.49 782.7,287.12 783.7,285.75 784.7,284.38 785.7,283.02 786.7,281.68 787.7,280.36 788.7,279.05 789.7,277.78 790.7,276.53 791.7,275.32 792.7,274.14 793.7,273.01 794.7,271.92 795.7,270.88 796.7,269.89 797.7,268.96 798.7,268.08 799.7,267.27 800.7,266.51 801.7,265.82 802.7,265.20 803.7,264.64 804.7,264.16 805.7,263.75 806.7,263.41 807.7,263.14 808.7,262.95 809.7,262.84 810.7,262.80 811.7,262.84 812.7,262.95 813.7,263.14 814.7,263.41 815.7,263.75 816.7,264.16 817.7,264.64 818.7,265.20 819.7,265.82 820.7,266.51 821.7,267.27 822.7,268.08 823.7,268.96 824.7,269.89 825.7,270.88 826.7,271.92 827.7,273.01 828.7,274.14 829.7,275.32 830.7,276.53 831.7,277.78 832.7,279.05 833.7,280.36 834.7,281.68 835.7,283.02 836.7,284.38 837.7,285.75 838.7,287.12 839.7,288.49 840.7,289.86 841.7,291.23 842.7,292.58 843.7,293.92 844.7,295.24 845.7,296.53 846.7,297.80 847.7,299.04 848.7,300.24 849.7,301.40 850.7,302.52 851.7,303.59 852.7,304.62 853.7,305.59 854.7,306.51 855.7,307.37 856.7,308.17 857.7,308.90 858.7,309.57 859.7,310.18 860.7,310.71 861.7,311.17 862.7,311.56 863.7,311.88 864.7,312.12 865.7,312.29 866.7,312.38 867.7,312.40 868.7,312.34 869.7,312.20 870.7,311.99 871.7,311.70 872.7,311.34 873.7,310.90 874.7,310.40 875.7,309.82 876.7,309.18 877.7,308.47 878.7,307.70 879.7,306.86 880.7,305.97 881.7,305.01 882.7,304.01 883.7,302.95 884.7,301.85 885.7,300.71 886.7,299.52 887.7,298.30 888.7,297.04 889.7,295.76 890.7,294.45 891.7,293.12 892.7,291.77 893.7,290.41 894.7,289.04 895.7,287.67 896.7,286.30 897.7,284.93 898.7,283.56 899.7,282.22 900.7,280.88 901.7,279.57 902.7,278.28 903.7,277.03 904.7,275.80 905.7,274.61 906.7,273.46 907.7,272.35 908.7,271.29 909.7,270.28 910.7,269.33 911.7,268.43 912.7,267.58 913.7,266.80 914.7,266.09 915.7,265.44 916.7,264.86 917.7,264.34 918.7,263.90 919.7,263.53 920.7,263.24 921.7,263.02 922.7,262.87 923.7,262.81 924.7,262.81 925.7,262.90 926.7,263.06 927.7,263.29 928.7,263.60 929.7,263.98 930.7,264.44 931.7,264.97 932.7,265.56 933.7,266.23 934.7,266.96 935.7,267.75 936.7,268.60 937.7,269.51 938.7,270.48 939.7,271.50 940.7,272.57 941.7,273.69 942.7,274.84 943.7,276.04 944.7,277.27 945.7,278.54 946.7,279.83 947.7,281.15 948.7,282.48 949.7,283.84 950.7,285.20 951.7,286.57 952.7,287.94 953.7,289.32 954.7,290.68 955.7,292.04 956.7,293.39 957.7,294.71 958.7,296.02 959.7,297.30 960.7,298.55 961.7,299.76 962.7,300.94 963.7,302.08 964.7,303.17 965.7,304.21 966.7,305.21" fill="none" stroke="#008800" stroke-width="0.95"/><polyline points="385.7,341.44 386.7,342.82 387.7,344.18 388.7,345.54 389.7,346.89 390.7,348.21 391.7,349.52 392.7,350.80 393.7,352.05 394.7,353.26 395.7,354.44 396.7,355.58 397.7,356.67 398.7,357.71 399.7,358.71 400.7,359.65 401.7,360.53 402.7,361.36 403.7,362.12 404.7,362.81 405.7,363.44 406.7,364.01 407.7,364.50 408.7,364.92 409.7,365.26 410.7,365.54 411.7,365.73 412.7,365.85 413.7,365.90 414.7,365.87 415.7,365.76 416.7,365.58 417.7,365.32 418.7,364.99 419.7,364.59 420.7,364.11 421.7,363.56 422.7,362.95 423.7,362.26 424.7,361.51 425.7,360.70 426.7,359.83 427.7,358.90 428.7,357.92 429.7,356.88 430.7,355.80 431.7,354.67 432.7,353.50 433.7,352.29 434.7,351.05 435.7,349.78 436.7,348.48 437.7,347.15 438.7,345.81 439.7,344.46 440.7,343.09 441.7,341.72 442.7,340.34 443.7,338.97 444.7,337.61 445.7,336.25 446.7,334.91 447.7,333.59 448.7,332.30 449.7,331.03 450.7,329.79 451.7,328.58 452.7,327.41 453.7,326.29 454.7,325.21 455.7,324.18 456.7,323.20 457.7,322.28 458.7,321.41 459.7,320.61 460.7,319.87 461.7,319.19 462.7,318.58 463.7,318.04 464.7,317.57 465.7,317.17 466.7,316.85 467.7,316.60 468.7,316.42 469.7,316.32 470.7,316.30 471.7,316.35 472.7,316.48 473.7,316.69 474.7,316.97 475.7,317.32 476.7,317.75 477.7,318.25 478.7,318.82 479.7,319.45 480.7,320.16 481.7,320.92 482.7,321.75 483.7,322.64 484.7,323.59 485.7,324.59 486.7,325.64 487.7,326.73 488.7,327.88 489.7,329.06 490.7,330.28 491.7,331.53 492.7,332.81 493.7,334.12 494.7,335.45 495.7,336.79 496.7,338.15 497.7,339.52 498.7,340.89 499.7,342.27 500.7,343.64 501.7,345.00 502.7,346.35 503.7,347.68 504.7,349.00 505.7,350.29 506.7,351.55 507.7,352.78 508.7,353.97 509.7,355.13 510.7,356.24 511.7,357.30 512.7,358.32 513.7,359.28 514.7,360.19 515.7,361.03 516.7,361.82 517.7,362.54 518.7,363.20 519.7,363.79 520.7,364.31 521.7,364.76 522.7,365.13 523.7,365.44 524.7,365.66 525.7,365.81 526.7,365.89 527.7,365.89 528.7,365.81 529.7,365.66 530.7,365.44 531.7,365.13 532.7,364.76 533.7,364.31 534.7,363.79 535.7,363.20 536.7,362.54 537.7,361.82 538.7,361.03 539.7,360.19 540.7,359.28 541.7,358.32 542.7,357.30 543.7,356.24 544.7,355.13 545.7,353.97 546.7,352.78 547.7,351.55 548.7,350.29 549.7,349.00 550.7,347.68 551.7,346.35 552.7,345.00 553.7,343.64 554.7,342.27 555.7,340.89 556.7,339.52 557.7,338.15 558.7,336.79 559.7,335.45 560.7,334.12 561.7,332.81 562.7,331.53 563.7,330.28 564.7,329.06 565.7,327.88 566.7,326.73 567.7,325.64 568.7,324.59 569.7,323.59 570.7,322.64 571.7,321.75 572.7,320.92 573.7,320.16 574.7,319.45 575.7,318.82 576.7,318.25 577.7,317.75 578.7,317.32 579.7,316.97 580.7,316.69 581.7,316.48 582.7,316.35 583.7,316.30 584.7,316.32 585.7,316.42 586.7,316.60 587.7,316.85 588.7,317.17 589.7,317.57 590.7,318.04 591.7,318.58 592.7,319.19 593.7,319.87 594.7,320.61 595.7,321.41 596.7,322.28 597.7,323.20 598.7,324.18 599.7,325.21 600.7,326.29 601.7,327.41 602.7,328.58 603.7,329.79 604.7,331.03 605.7,332.30 606.7,333.59 607.7,334.91 608.7,336.25 609.7,337.61 610.7,338.97 611.7,340.34 612.7,341.72 613.7,343.09 614.7,344.46 615.7,345.81 616.7,347.15 617.7,348.48 618.7,349.78 619.7,351.05 620.7,352.29 621.7,353.50 622.7,354.67 623.7,355.80 624.7,356.88 625.7,357.92 626.7,358.90 627.7,359.83 628.7,360.70 629.7,361.51 630.7,362.26 631.7,362.95 632.7,363.56 633.7,364.11 634.7,364.59 635.7,364.99 636.7,365.32 637.7,365.58 638.7,365.76 639.7,365.87 640.7,365.90 641.7,365.85 642.7,365.73 643.7,365.54 644.7,365.26 645.7,364.92 646.7,364.50 647.7,364.01 648.7,363.44 649.7,362.81 650.7,362.12 651.7,361.36 652.7,360.53 653.7,359.65 654.7,358.71 655.7,357.71 656.7,356.67 657.7,355.58 658.7,354.44 659.7,353.26 660.7,352.05 661.7,350.80 662.7,349.52 663.7,348.21 664.7,346.89 665.7,345.54 666.7,344.18 667.7,342.82 668.7,341.44 669.7,340.07 670.7,338.70 671.7,337.34 672.7,335.98 673.7,334.65 674.7,333.33 675.7,332.04 676.7,330.77 677.7,329.54 678.7,328.34 679.7,327.19 680.7,326.07 681.7,325.00 682.7,323.98 683.7,323.01 684.7,322.10 685.7,321.25 686.7,320.46 687.7,319.73 688.7,319.06 689.7,318.47 690.7,317.94 691.7,317.48 692.7,317.10 693.7,316.79 694.7,316.56 695.7,316.40 696.7,316.31 697.7,316.31 698.7,316.37 699.7,316.52 700.7,316.74 701.7,317.03 702.7,317.40 703.7,317.84 704.7,318.36 705.7,318.94 706.7,319.59 707.7,320.30 708.7,321.08 709.7,321.93 710.7,322.83 711.7,323.78 712.7,324.79 713.7,325.85 714.7,326.96 715.7,328.11 716.7,329.30 717.7,330.53 718.7,331.78 719.7,333.07 720.7,334.38 721.7,335.72 722.7,337.06 723.7,338.43 724.7,339.80 725.7,341.17 726.7,342.54 727.7,343.91 728.7,345.27 729.7,346.62 730.7,347.95 731.7,349.26 732.7,350.54 733.7,351.80 734.7,353.02 735.7,354.21 736.7,355.35 737.7,356.45 738.7,357.51 739.7,358.51 740.7,359.47 741.7,360.36 742.7,361.20 743.7,361.97 744.7,362.68 745.7,363.32 746.7,363.90 747.7,364.40 748.7,364.84 749.7,365.20 750.7,365.49 751.7,365.70 752.7,365.84 753.7,365.90 754.7,365.88 755.7,365.79 756.7,365.62 757.7,365.38 758.7,365.06 759.7,364.67 760.7,364.21 761.7,363.68 762.7,363.07 763.7,362.40 764.7,361.67 765.7,360.87 766.7,360.01 767.7,359.09 768.7,358.12 769.7,357.09 770.7,356.02 771.7,354.90 772.7,353.74 773.7,352.54 774.7,351.30 775.7,350.03 776.7,348.74 777.7,347.42 778.7,346.08 779.7,344.73 780.7,343.36 781.7,341.99 782.7,340.62 783.7,339.25 784.7,337.88 785.7,336.52 786.7,335.18 787.7,333.86 788.7,332.55 789.7,331.28 790.7,330.03 791.7,328.82 792.7,327.64 793.7,326.51 794.7,325.42 795.7,324.38 796.7,323.39 797.7,322.46 798.7,321.58 799.7,320.77 800.7,320.01 801.7,319.32 802.7,318.70 803.7,318.14 804.7,317.66 805.7,317.25 806.7,316.91 807.7,316.64 808.7,316.45 809.7,316.34 810.7,316.30 811.7,316.34 812.7,316.45 813.7,316.64 814.7,316.91 815.7,317.25 816.7,317.66 817.7,318.14 818.7,318.70 819.7,319.32 820.7,320.01 821.7,320.77 822.7,321.58 823.7,322.46 824.7,323.39 825.7,324.38 826.7,325.42 827.7,326.51 828.7,327.64 829.7,328.82 830.7,330.03 831.7,331.28 832.7,332.55 833.7,333.86 834.7,335.18 835.7,336.52 836.7,337.88 837.7,339.25 838.7,340.62 839.7,341.99 840.7,343.36 841.7,344.73 842.7,346.08 843.7,347.42 844.7,348.74 845.7,350.03 846.7,351.30 847.7,352.54 848.7,353.74 849.7,354.90 850.7,356.02 851.7,357.09 852.7,358.12 853.7,359.09 854.7,360.01 855.7,360.87 856.7,361.67 857.7,362.40 858.7,363.07 859.7,363.68 860.7,364.21 861.7,364.67 862.7,365.06 863.7,365.38 864.7,365.62 865.7,365.79 866.7,365.88 867.7,365.90 868.7,365.84 869.7,365.70 870.7,365.49 871.7,365.20 872.7,364.84 873.7,364.40 874.7,363.90 875.7,363.32 876.7,362.68 877.7,361.97 878.7,361.20 879.7,360.36 880.7,359.47 881.7,358.51 882.7,357.51 883.7,356.45 884.7,355.35 885.7,354.21 886.7,353.02 887.7,351.80 888.7,350.54 889.7,349.26 890.7,347.95 891.7,346.62 892.7,345.27 893.7,343.91 894.7,342.54 895.7,341.17 896.7,339.80 897.7,338.43 898.7,337.06 899.7,335.72 900.7,334.38 901.7,333.07 902.7,331.78 903.7,330.53 904.7,329.30 905.7,328.11 906.7,326.96 907.7,325.85 908.7,324.79 909.7,323.78 910.7,322.83 911.7,321.93 912.7,321.08 913.7,320.30 914.7,319.59 915.7,318.94 916.7,318.36 917.7,317.84 918.7,317.40 919.7,317.03 920.7,316.74 921.7,316.52 922.7,316.37 923.7,316.31 924.7,316.31 925.7,316.40 926.7,316.56 927.7,316.79 928.7,317.10 929.7,317.48 930.7,317.94 931.7,318.47 932.7,319.06 933.7,319.73 934.7,320.46 935.7,321.25 936.7,322.10 937.7,323.01 938.7,323.98 939.7,325.00 940.7,326.07 941.7,327.19 942.7,328.34 943.7,329.54 944.7,330.77 945.7,332.04 946.7,333.33 947.7,334.65 948.7,335.98 949.7,337.34 950.7,338.70 951.7,340.07 952.7,341.44 953.7,342.82 954.7,344.18 955.7,345.54 956.7,346.89 957.7,348.21 958.7,349.52 959.7,350.80 960.7,352.05 961.7,353.26 962.7,354.44 963.7,355.58 964.7,356.67 965.7,357.71 966.7,358.71" fill="none" stroke="#008800" stroke-width="0.95"/><polyline points="385.7,394.94 386.7,396.32 387.7,397.68 388.7,399.04 389.7,400.39 390.7,401.71 391.7,403.02 392.7,404.30 393.7,405.55 394.7,406.76 395.7,407.94 396.7,409.08 397.7,410.17 398.7,411.21 399.7,412.21 400.7,413.15 401.7,414.03 402.7,414.86 403.7,415.62 404.7,416.31 405.7,416.94 406.7,417.51 407.7,418.00 408.7,418.42 409.7,418.76 410.7,419.04 411.7,419.23 412.7,419.35 413.7,419.40 414.7,419.37 415.7,419.26 416.7,419.08 417.7,418.82 418.7,418.49 419.7,418.09 420.7,417.61 421.7,417.06 422.7,416.45 423.7,415.76 424.7,415.01 425.7,414.20 426.7,413.33 427.7,412.40 428.7,411.42 429.7,410.38 430.7,409.30 431.7,408.17 432.7,407.00 433.7,405.79 434.7,404.55 435.7,403.28 436.7,401.98 437.7,400.65 438.7,399.31 439.7,397.96 440.7,396.59 441.7,395.22 442.7,393.84 443.7,392.47 444.7,391.11 445.7,389.75 446.7,388.41 447.7,387.09 448.7,385.80 449.7,384.53 450.7,383.29 451.7,382.08 452.7,380.91 453.7,379.79 454.7,378.71 455.7,377.68 456.7,376.70 457.7,375.78 458.7,374.91 459.7,374.11 460.7,373.37 461.7,372.69 462.7,372.08 463.7,371.54 464.7,371.07 465.7,370.67 466.7,370.35 467.7,370.10 468.7,369.92 469.7,369.82 470.7,369.80 471.7,369.85 472.7,369.98 473.7,370.19 474.7,370.47 475.7,370.82 476.7,371.25 477.7,371.75 478.7,372.32 479.7,372.95 480.7,373.66 481.7,374.42 482.7,375.25 483.7,376.14 484.7,377.09 485.7,378.09 486.7,379.14 487.7,380.23 488.7,381.38 489.7,382.56 490.7,383.78 491.7,385.03 492.7,386.31 493.7,387.62 494.7,388.95 495.7,390.29 496.7,391.65 497.7,393.02 498.7,394.39 499.7,395.77 500.7,397.14 501.7,398.50 502.7,399.85 503.7,401.18 504.7,402.50 505.7,403.79 506.7,405.05 507.7,406.28 508.7,407.47 509.7,408.63 510.7,409.74 511.7,410.80 512.7,411.82 513.7,412.78 514.7,413.69 515.7,414.53 516.7,415.32 517.7,416.04 518.7,416.70 519.7,417.29 520.7,417.81 521.7,418.26 522.7,418.63 523.7,418.94 524.7,419.16 525.7,419.31 526.7,419.39 527.7,419.39 528.7,419.31 529.7,419.16 530.7,418.94 531.7,418.63 532.7,418.26 533.7,417.81 534.7,417.29 535.7,416.70 536.7,416.04 537.7,415.32 538.7,414.53 539.7,413.69 540.7,412.78 541.7,411.82 542.7,410.80 543.7,409.74 544.7,408.63 545.7,407.47 546.7,406.28 547.7,405.05 548.7,403.79 549.7,402.50 550.7,401.18 551.7,399.85 552.7,398.50 553.7,397.14 554.7,395.77 555.7,394.39 556.7,393.02 557.7,391.65 558.7,390.29 559.7,388.95 560.7,387.62 561.7,386.31 562.7,385.03 563.7,383.78 564.7,382.56 565.7,381.38 566.7,380.23 567.7,379.14 568.7,378.09 569.7,377.09 570.7,376.14 571.7,375.25 572.7,374.42 573.7,373.66 574.7,372.95 575.7,372.32 576.7,371.75 577.7,371.25 578.7,370.82 579.7,370.47 580.7,370.19 581.7,369.98 582.7,369.85 583.7,369.80 584.7,369.82 585.7,369.92 586.7,370.10 587.7,370.35 588.7,370.67 589.7,371.07 590.7,371.54 591.7,372.08 592.7,372.69 593.7,373.37 594.7,374.11 595.7,374.91 596.7,375.78 597.7,376.70 598.7,377.68 599.7,378.71 600.7,379.79 601.7,380.91 602.7,382.08 603.7,383.29 604.7,384.53 605.7,385.80 606.7,387.09 607.7,388.41 608.7,389.75 609.7,391.11 610.7,392.47 611.7,393.84 612.7,395.22 613.7,396.59 614.7,397.96 615.7,399.31 616.7,400.65 617.7,401.98 618.7,403.28 619.7,404.55 620.7,405.79 621.7,407.00 622.7,408.17 623.7,409.30 624.7,410.38 625.7,411.42 626.7,412.40 627.7,413.33 628.7,414.20 629.7,415.01 630.7,415.76 631.7,416.45 632.7,417.06 633.7,417.61 634.7,418.09 635.7,418.49 636.7,418.82 637.7,419.08 638.7,419.26 639.7,419.37 640.7,419.40 641.7,419.35 642.7,419.23 643.7,419.04 644.7,418.76 645.7,418.42 646.7,418.00 647.7,417.51 648.7,416.94 649.7,416.31 650.7,415.62 651.7,414.86 652.7,414.03 653.7,413.15 654.7,412.21 655.7,411.21 656.7,410.17 657.7,409.08 658.7,407.94 659.7,406.76 660.7,405.55 661.7,404.30 662.7,403.02 663.7,401.71 664.7,400.39 665.7,399.04 666.7,397.68 667.7,396.32 668.7,394.94 669.7,393.57 670.7,392.20 671.7,390.84 672.7,389.48 673.7,388.15 674.7,386.83 675.7,385.54 676.7,384.27 677.7,383.04 678.7,381.84 679.7,380.69 680.7,379.57 681.7,378.50 682.7,377.48 683.7,376.51 684.7,375.60 685.7,374.75 686.7,373.96 687.7,373.23 688.7,372.56 689.7,371.97 690.7,371.44 691.7,370.98 692.7,370.60 693.7,370.29 694.7,370.06 695.7,369.90 696.7,369.81 697.7,369.81 698.7,369.87 699.7,370.02 700.7,370.24 701.7,370.53 702.7,370.90 703.7,371.34 704.7,371.86 705.7,372.44 706.7,373.09 707.7,373.80 708.7,374.58 709.7,375.43 710.7,376.33 711.7,377.28 712.7,378.29 713.7,379.35 714.7,380.46 715.7,381.61 716.7,382.80 717.7,384.03 718.7,385.28 719.7,386.57 720.7,387.88 721.7,389.22 722.7,390.56 723.7,391.93 724.7,393.30 725.7,394.67 726.7,396.04 727.7,397.41 728.7,398.77 729.7,400.12 730.7,401.45 731.7,402.76 732.7,404.04 733.7,405.30 734.7,406.52 735.7,407.71 736.7,408.85 737.7,409.95 738.7,411.01 739.7,412.01 740.7,412.97 741.7,413.86 742.7,414.70 743.7,415.47 744.7,416.18 745.7,416.82 746.7,417.40 747.7,417.90 748.7,418.34 749.7,418.70 750.7,418.99 751.7,419.20 752.7,419.34 753.7,419.40 754.7,419.38 755.7,419.29 756.7,419.12 757.7,418.88 758.7,418.56 759.7,418.17 760.7,417.71 761.7,417.18 762.7,416.57 763.7,415.90 764.7,415.17 765.7,414.37 766.7,413.51 767.7,412.59 768.7,411.62 769.7,410.59 770.7,409.52 771.7,408.40 772.7,407.24 773.7,406.04 774.7,404.80 775.7,403.53 776.7,402.24 777.7,400.92 778.7,399.58 779.7,398.23 780.7,396.86 781.7,395.49 782.7,394.12 783.7,392.75 784.7,391.38 785.7,390.02 786.7,388.68 787.7,387.36 788.7,386.05 789.7,384.78 790.7,383.53 791.7,382.32 792.7,381.14 793.7,380.01 794.7,378.92 795.7,377.88 796.7,376.89 797.7,375.96 798.7,375.08 799.7,374.27 800.7,373.51 801.7,372.82 802.7,372.20 803.7,371.64 804.7,371.16 805.7,370.75 806.7,370.41 807.7,370.14 808.7,369.95 809.7,369.84 810.7,369.80 811.7,369.84 812.7,369.95 813.7,370.14 814.7,370.41 815.7,370.75 816.7,371.16 817.7,371.64 818.7,372.20 819.7,372.82 820.7,373.51 821.7,374.27 822.7,375.08 823.7,375.96 824.7,376.89 825.7,377.88 826.7,378.92 827.7,380.01 828.7,381.14 829.7,382.32 830.7,383.53 831.7,384.78 832.7,386.05 833.7,387.36 834.7,388.68 835.7,390.02 836.7,391.38 837.7,392.75 838.7,394.12 839.7,395.49 840.7,396.86 841.7,398.23 842.7,399.58 843.7,400.92 844.7,402.24 845.7,403.53 846.7,404.80 847.7,406.04 848.7,407.24 849.7,408.40 850.7,409.52 851.7,410.59 852.7,411.62 853.7,412.59 854.7,413.51 855.7,414.37 856.7,415.17 857.7,415.90 858.7,416.57 859.7,417.18 860.7,417.71 861.7,418.17 862.7,418.56 863.7,418.88 864.7,419.12 865.7,419.29 866.7,419.38 867.7,419.40 868.7,419.34 869.7,419.20 870.7,418.99 871.7,418.70 872.7,418.34 873.7,417.90 874.7,417.40 875.7,416.82 876.7,416.18 877.7,415.47 878.7,414.70 879.7,413.86 880.7,412.97 881.7,412.01 882.7,411.01 883.7,409.95 884.7,408.85 885.7,407.71 886.7,406.52 887.7,405.30 888.7,404.04 889.7,402.76 890.7,401.45 891.7,400.12 892.7,398.77 893.7,397.41 894.7,396.04 895.7,394.67 896.7,393.30 897.7,391.93 898.7,390.56 899.7,389.22 900.7,387.88 901.7,386.57 902.7,385.28 903.7,384.03 904.7,382.80 905.7,381.61 906.7,380.46 907.7,379.35 908.7,378.29 909.7,377.28 910.7,376.33 911.7,375.43 912.7,374.58 913.7,373.80 914.7,373.09 915.7,372.44 916.7,371.86 917.7,371.34 918.7,370.90 919.7,370.53 920.7,370.24 921.7,370.02 922.7,369.87 923.7,369.81 924.7,369.81 925.7,369.90 926.7,370.06 927.7,370.29 928.7,370.60 929.7,370.98 930.7,371.44 931.7,371.97 932.7,372.56 933.7,373.23 934.7,373.96 935.7,374.75 936.7,375.60 937.7,376.51 938.7,377.48 939.7,378.50 940.7,379.57 941.7,380.69 942.7,381.84 943.7,383.04 944.7,384.27 945.7,385.54 946.7,386.83 947.7,388.15 948.7,389.48 949.7,390.84 950.7,392.20 951.7,393.57 952.7,394.94 953.7,396.32 954.7,397.68 955.7,399.04 956.7,400.39 957.7,401.71 958.7,403.02 959.7,404.30 960.7,405.55 961.7,406.76 962.7,407.94 963.7,409.08 964.7,410.17 965.7,411.21 966.7,412.21" fill="none" stroke="#008800" stroke-width="0.95"/><rect x="385.6" y="423.5" width="577.9" height="12.5" fill="#5c7222"/><rect x="964.1" y="423.5" width="3.8" height="12.5" fill="#6e8a2e"/><rect x="385.1" y="436.4" width="571" height="12.2" fill="#baa600"/><rect x="956.1" y="436.4" width="12" height="12.2" fill="#e2d200"/><rect x="385.6" y="435.6" width="582.5" height="0.9" fill="#3a3a18"/><rect x="385.1" y="446.9" width="583" height="1.6" fill="#d8ca00"/><rect x="384.74" y="445.4" width="1" height="3.0" fill="#5a5000" fill-opacity="0.9"/><rect x="399.86" y="445.4" width="1" height="3.0" fill="#5a5000" fill-opacity="0.9"/><rect x="407.42" y="445.4" width="1" height="3.0" fill="#5a5000" fill-opacity="0.9"/><rect x="414.98" y="445.4" width="1" height="3.0" fill="#5a5000" fill-opacity="0.9"/><rect x="422.54" y="445.4" width="1" height="3.0" fill="#5a5000" fill-opacity="0.9"/><rect x="430.10" y="443.9" width="1" height="4.5" fill="#5a5000" fill-opacity="0.9"/><rect x="437.66" y="445.4" width="1" height="3.0" fill="#5a5000" fill-opacity="0.9"/><rect x="445.22" y="445.4" width="1" height="3.0" fill="#5a5000" fill-opacity="0.9"/><rect x="452.78" y="445.4" width="1" height="3.0" fill="#5a5000" fill-opacity="0.9"/><rect x="460.34" y="445.4" width="1" height="3.0" fill="#5a5000" fill-opacity="0.9"/><rect x="475.46" y="445.4" width="1" height="3.0" fill="#5a5000" fill-opacity="0.9"/><rect x="483.02" y="445.4" width="1" height="3.0" fill="#5a5000" fill-opacity="0.9"/><rect x="490.58" y="445.4" width="1" height="3.0" fill="#5a5000" fill-opacity="0.9"/><rect x="498.14" y="445.4" width="1" height="3.0" fill="#5a5000" fill-opacity="0.9"/><rect x="505.70" y="443.9" width="1" height="4.5" fill="#5a5000" fill-opacity="0.9"/><rect x="513.26" y="445.4" width="1" height="3.0" fill="#5a5000" fill-opacity="0.9"/><rect x="520.82" y="445.4" width="1" height="3.0" fill="#5a5000" fill-opacity="0.9"/><rect x="528.38" y="445.4" width="1" height="3.0" fill="#5a5000" fill-opacity="0.9"/><rect x="535.94" y="445.4" width="1" height="3.0" fill="#5a5000" fill-opacity="0.9"/><rect x="551.06" y="445.4" width="1" height="3.0" fill="#5a5000" fill-opacity="0.9"/><rect x="558.62" y="445.4" width="1" height="3.0" fill="#5a5000" fill-opacity="0.9"/><rect x="566.18" y="445.4" width="1" height="3.0" fill="#5a5000" fill-opacity="0.9"/><rect x="573.74" y="445.4" width="1" height="3.0" fill="#5a5000" fill-opacity="0.9"/><rect x="581.30" y="443.9" width="1" height="4.5" fill="#5a5000" fill-opacity="0.9"/><rect x="588.86" y="445.4" width="1" height="3.0" fill="#5a5000" fill-opacity="0.9"/><rect x="596.42" y="445.4" width="1" height="3.0" fill="#5a5000" fill-opacity="0.9"/><rect x="603.98" y="445.4" width="1" height="3.0" fill="#5a5000" fill-opacity="0.9"/><rect x="611.54" y="445.4" width="1" height="3.0" fill="#5a5000" fill-opacity="0.9"/><rect x="626.66" y="445.4" width="1" height="3.0" fill="#5a5000" fill-opacity="0.9"/><rect x="634.22" y="445.4" width="1" height="3.0" fill="#5a5000" fill-opacity="0.9"/><rect x="641.78" y="445.4" width="1" height="3.0" fill="#5a5000" fill-opacity="0.9"/><rect x="649.34" y="445.4" width="1" height="3.0" fill="#5a5000" fill-opacity="0.9"/><rect x="656.90" y="443.9" width="1" height="4.5" fill="#5a5000" fill-opacity="0.9"/><rect x="664.46" y="445.4" width="1" height="3.0" fill="#5a5000" fill-opacity="0.9"/><rect x="672.02" y="445.4" width="1" height="3.0" fill="#5a5000" fill-opacity="0.9"/><rect x="679.58" y="445.4" width="1" height="3.0" fill="#5a5000" fill-opacity="0.9"/><rect x="687.14" y="445.4" width="1" height="3.0" fill="#5a5000" fill-opacity="0.9"/><rect x="702.26" y="445.4" width="1" height="3.0" fill="#5a5000" fill-opacity="0.9"/><rect x="709.82" y="445.4" width="1" height="3.0" fill="#5a5000" fill-opacity="0.9"/><rect x="717.38" y="445.4" width="1" height="3.0" fill="#5a5000" fill-opacity="0.9"/><rect x="724.94" y="445.4" width="1" height="3.0" fill="#5a5000" fill-opacity="0.9"/><rect x="732.50" y="443.9" width="1" height="4.5" fill="#5a5000" fill-opacity="0.9"/><rect x="740.06" y="445.4" width="1" height="3.0" fill="#5a5000" fill-opacity="0.9"/><rect x="747.62" y="445.4" width="1" height="3.0" fill="#5a5000" fill-opacity="0.9"/><rect x="755.18" y="445.4" width="1" height="3.0" fill="#5a5000" fill-opacity="0.9"/><rect x="762.74" y="445.4" width="1" height="3.0" fill="#5a5000" fill-opacity="0.9"/><rect x="777.86" y="445.4" width="1" height="3.0" fill="#5a5000" fill-opacity="0.9"/><rect x="785.42" y="445.4" width="1" height="3.0" fill="#5a5000" fill-opacity="0.9"/><rect x="792.98" y="445.4" width="1" height="3.0" fill="#5a5000" fill-opacity="0.9"/><rect x="800.54" y="445.4" width="1" height="3.0" fill="#5a5000" fill-opacity="0.9"/><rect x="808.10" y="443.9" width="1" height="4.5" fill="#5a5000" fill-opacity="0.9"/><rect x="815.66" y="445.4" width="1" height="3.0" fill="#5a5000" fill-opacity="0.9"/><rect x="823.22" y="445.4" width="1" height="3.0" fill="#5a5000" fill-opacity="0.9"/><rect x="830.78" y="445.4" width="1" height="3.0" fill="#5a5000" fill-opacity="0.9"/><rect x="838.34" y="445.4" width="1" height="3.0" fill="#5a5000" fill-opacity="0.9"/><rect x="853.46" y="445.4" width="1" height="3.0" fill="#5a5000" fill-opacity="0.9"/><rect x="861.02" y="445.4" width="1" height="3.0" fill="#5a5000" fill-opacity="0.9"/><rect x="868.58" y="445.4" width="1" height="3.0" fill="#5a5000" fill-opacity="0.9"/><rect x="876.14" y="445.4" width="1" height="3.0" fill="#5a5000" fill-opacity="0.9"/><rect x="883.70" y="443.9" width="1" height="4.5" fill="#5a5000" fill-opacity="0.9"/><rect x="891.26" y="445.4" width="1" height="3.0" fill="#5a5000" fill-opacity="0.9"/><rect x="898.82" y="445.4" width="1" height="3.0" fill="#5a5000" fill-opacity="0.9"/><rect x="906.38" y="445.4" width="1" height="3.0" fill="#5a5000" fill-opacity="0.9"/><rect x="913.94" y="445.4" width="1" height="3.0" fill="#5a5000" fill-opacity="0.9"/><rect x="929.06" y="445.4" width="1" height="3.0" fill="#5a5000" fill-opacity="0.9"/><rect x="936.62" y="445.4" width="1" height="3.0" fill="#5a5000" fill-opacity="0.9"/><rect x="944.18" y="445.4" width="1" height="3.0" fill="#5a5000" fill-opacity="0.9"/><rect x="951.74" y="445.4" width="1" height="3.0" fill="#5a5000" fill-opacity="0.9"/><rect x="959.30" y="443.9" width="1" height="4.5" fill="#5a5000" fill-opacity="0.9"/><rect x="966.86" y="445.4" width="1" height="3.0" fill="#5a5000" fill-opacity="0.9"/><rect x="392.30" y="82.5" width="1" height="366" fill="#a0a0a0" fill-opacity="0.75"/><rect x="467.90" y="82.5" width="1" height="366" fill="#a0a0a0" fill-opacity="0.75"/><rect x="543.50" y="82.5" width="1" height="366" fill="#a0a0a0" fill-opacity="0.75"/><rect x="619.10" y="82.5" width="1" height="366" fill="#a0a0a0" fill-opacity="0.75"/><rect x="694.70" y="82.5" width="1" height="366" fill="#a0a0a0" fill-opacity="0.75"/><rect x="770.30" y="82.5" width="1" height="366" fill="#a0a0a0" fill-opacity="0.75"/><rect x="845.90" y="82.5" width="1" height="366" fill="#a0a0a0" fill-opacity="0.75"/><rect x="921.50" y="82.5" width="1" height="366" fill="#a0a0a0" fill-opacity="0.75"/><rect x="467.6" y="63" width="1.4" height="385.6" fill="#1f6fc6"/><rect x="921.4" y="63" width="1.4" height="385.6" fill="#1f6fc6"/><rect x="955.6" y="52.5" width="1.1" height="396" fill="#e2d000"/><rect x="467.8" y="53.6" width="17" height="9.8" fill="#1577e4" stroke="#8ab8f0" stroke-width="0.7"/><rect x="921.5" y="53.9" width="16.6" height="9.4" fill="#1577e4" stroke="#8ab8f0" stroke-width="0.7"/><rect x="947.9" y="44.3" width="16.8" height="8.3" fill="#e8e000"/><rect x="467.7" y="427.2" width="21.9" height="9.2" fill="#1170dc" stroke="#8ab8f0" stroke-width="0.8"/><rect x="956.1" y="427.6" width="6.6" height="8.8" fill="#e8dc40"/></svg>
<div class="a" style="left:384px;top:476.6px;width:591px;height:9.4px;background:#f8f8f8"></div>
<div class="a" style="left:468.3px;top:478.6px;width:78.8px;height:5.4px;background:#c4c4c4;border-radius:3px"></div>
<svg class="a" style="left:384px;top:476px" width="591" height="10"><path d="M7 3 L4 6 L7 9" fill="none" stroke="#666" stroke-width="1.1"/><path d="M587.5 3 L590.5 6 L587.5 9" fill="none" stroke="#666" stroke-width="1.1"/></svg>
<div class="a" style="left:968.2px;top:44px;width:7px;height:432px;background:#f8f8f8;border-left:1px solid #d0d0d0"></div>
<div class="a" style="left:970.5px;top:206.5px;width:5px;height:219px;background:#c4c4c4;border-radius:3px 0 0 3px"></div>
<svg class="a" style="left:968px;top:44px" width="7" height="432"><path d="M3 6 L6 3 L9 6" fill="none" stroke="#666" stroke-width="1"/><path d="M3 427 L6 430 L9 427" fill="none" stroke="#666" stroke-width="1"/></svg>
<div class="t" style="left:7.00px;top:7.90px;font-family:'Liberation Sans';font-size:8.9px;font-weight:bold;color:#111;letter-spacing:0.000px;transform:scaleX(0.8872);transform-origin:0 0;">Waveform - hw_ila_1</div>
<div class="t" style="left:500.80px;top:9.70px;font-family:'Liberation Sans';font-size:10.2px;font-weight:normal;color:#e23a44;letter-spacing:0.154px;">Period = (275-155)/4 = 30 cycles of AXI-Stream clock</div>
<div class="t" style="left:500.80px;top:24.80px;font-family:'Liberation Sans';font-size:10.2px;font-weight:normal;color:#e23a44;letter-spacing:0.259px;">Signal freq = 150MHz/30 = 5MHz</div>
<div class="t" style="left:12.70px;top:49.40px;font-family:'Liberation Sans';font-size:8.9px;font-weight:normal;color:#3a3a3a;letter-spacing:0.000px;transform:scaleX(0.8861);transform-origin:0 0;">ILA Status: Idle</div>
<div class="t" style="left:14.30px;top:67.90px;font-family:'Liberation Sans';font-size:8.9px;font-weight:bold;color:#111;letter-spacing:0.000px;transform:scaleX(0.8724);transform-origin:0 0;">Name</div>
<div class="t" style="left:278.50px;top:67.90px;font-family:'Liberation Sans';font-size:8.9px;font-weight:bold;color:#111;letter-spacing:0.000px;transform:scaleX(0.8921);transform-origin:0 0;">Value</div>
<div class="t" style="left:58.40px;top:86.80px;font-family:'Liberation Sans';font-size:8.9px;font-weight:normal;color:#e6e6e6;letter-spacing:0.000px;transform:scaleX(0.8375);transform-origin:0 0;">slot_2 : usp_rf_data_converter_0_m10_axis : TLAST</div>
<div class="t" style="left:273.00px;top:86.80px;font-family:'Liberation Sans';font-size:8.9px;font-weight:normal;color:#ececec;letter-spacing:0.000px;transform:scaleX(0.93);transform-origin:0 0;">0</div>
<div class="t" style="left:58.40px;top:102.35px;font-family:'Liberation Sans';font-size:8.9px;font-weight:normal;color:#e6e6e6;letter-spacing:0.000px;transform:scaleX(0.8527);transform-origin:0 0;">slot_2 : usp_rf_data_converter_0_m10_axis : TDATA</div>
<div class="t" style="left:273.00px;top:102.35px;font-family:'Liberation Sans';font-size:8.9px;font-weight:normal;color:#ececec;letter-spacing:0.000px;transform:scaleX(0.8807);transform-origin:0 0;">0e19fc9f</div>
<div class="t" style="left:28.40px;top:117.90px;font-family:'Liberation Sans';font-size:8.9px;font-weight:normal;color:#e6e6e6;letter-spacing:0.000px;transform:scaleX(0.8508);transform-origin:0 0;">slot_4 : usp_rf_data_converter_0_m20_axis : Interface</div>
<div class="t" style="left:273.00px;top:117.90px;font-family:'Liberation Sans';font-size:8.9px;font-weight:normal;color:#ececec;letter-spacing:0.000px;transform:scaleX(0.8936);transform-origin:0 0;">Active</div>
<div class="t" style="left:43.40px;top:133.45px;font-family:'Liberation Sans';font-size:8.9px;font-weight:normal;color:#e6e6e6;letter-spacing:0.000px;transform:scaleX(0.8446);transform-origin:0 0;">slot_4 : usp_rf_data_converter_0_m20_axis : T Channel</div>
<div class="t" style="left:273.00px;top:133.45px;font-family:'Liberation Sans';font-size:8.9px;font-weight:normal;color:#ececec;letter-spacing:0.000px;transform:scaleX(0.8714);transform-origin:0 0;">Stream Beat</div>
<div class="t" style="left:58.40px;top:149.00px;font-family:'Liberation Sans';font-size:8.9px;font-weight:normal;color:#e6e6e6;letter-spacing:0.000px;transform:scaleX(0.8468);transform-origin:0 0;">slot_4 : usp_rf_data_converter_0_m20_axis : TVALID</div>
<div class="t" style="left:273.00px;top:149.00px;font-family:'Liberation Sans';font-size:8.9px;font-weight:normal;color:#ececec;letter-spacing:0.000px;transform:scaleX(0.93);transform-origin:0 0;">1</div>
<div class="t" style="left:58.40px;top:164.55px;font-family:'Liberation Sans';font-size:8.9px;font-weight:normal;color:#e6e6e6;letter-spacing:0.000px;transform:scaleX(0.8373);transform-origin:0 0;">slot_4 : usp_rf_data_converter_0_m20_axis : TREADY</div>
<div class="t" style="left:273.00px;top:164.55px;font-family:'Liberation Sans';font-size:8.9px;font-weight:normal;color:#ececec;letter-spacing:0.000px;transform:scaleX(0.93);transform-origin:0 0;">1</div>
<div class="t" style="left:58.40px;top:180.10px;font-family:'Liberation Sans';font-size:8.9px;font-weight:normal;color:#e6e6e6;letter-spacing:0.000px;transform:scaleX(0.8370);transform-origin:0 0;">slot_4 : usp_rf_data_converter_0_m20_axis : TLAST</div>
<div class="t" style="left:273.00px;top:180.10px;font-family:'Liberation Sans';font-size:8.9px;font-weight:normal;color:#ececec;letter-spacing:0.000px;transform:scaleX(0.93);transform-origin:0 0;">0</div>
<div class="t" style="left:58.40px;top:195.65px;font-family:'Liberation Sans';font-size:8.9px;font-weight:normal;color:#e6e6e6;letter-spacing:0.000px;transform:scaleX(0.8537);transform-origin:0 0;">slot_4 : usp_rf_data_converter_0_m20_axis : TDATA</div>
<div class="t" style="left:273.00px;top:195.65px;font-family:'Liberation Sans';font-size:8.9px;font-weight:normal;color:#ececec;letter-spacing:0.000px;transform:scaleX(0.93);transform-origin:0 0;">0de5fcec</div>
<div class="t" style="left:19.30px;top:230.90px;font-family:'Liberation Sans';font-size:8.9px;font-weight:normal;color:#3a3a3a;letter-spacing:0.000px;transform:scaleX(0.8503);transform-origin:0 0;">ADC T0CH0</div>
<div class="t" style="left:273.00px;top:230.90px;font-family:'Liberation Sans';font-size:8.9px;font-weight:normal;color:#3a3a3a;letter-spacing:0.000px;transform:scaleX(0.9006);transform-origin:0 0;">-850</div>
<div class="t" style="left:19.30px;top:284.40px;font-family:'Liberation Sans';font-size:8.9px;font-weight:normal;color:#e6e6e6;letter-spacing:0.000px;transform:scaleX(0.8503);transform-origin:0 0;">ADC T0CH2</div>
<div class="t" style="left:273.00px;top:284.40px;font-family:'Liberation Sans';font-size:8.9px;font-weight:normal;color:#e6e6e6;letter-spacing:0.000px;transform:scaleX(0.9006);transform-origin:0 0;">-872</div>
<div class="t" style="left:19.30px;top:337.90px;font-family:'Liberation Sans';font-size:8.9px;font-weight:normal;color:#e6e6e6;letter-spacing:0.000px;transform:scaleX(0.8503);transform-origin:0 0;">ADC T1CH0</div>
<div class="t" style="left:273.00px;top:337.90px;font-family:'Liberation Sans';font-size:8.9px;font-weight:normal;color:#e6e6e6;letter-spacing:0.000px;transform:scaleX(0.9006);transform-origin:0 0;">-865</div>
<div class="t" style="left:19.30px;top:391.40px;font-family:'Liberation Sans';font-size:8.9px;font-weight:normal;color:#e6e6e6;letter-spacing:0.000px;transform:scaleX(0.8503);transform-origin:0 0;">ADC T2CH0</div>
<div class="t" style="left:273.00px;top:391.40px;font-family:'Liberation Sans';font-size:8.9px;font-weight:normal;color:#e6e6e6;letter-spacing:0.000px;transform:scaleX(0.9006);transform-origin:0 0;">-788</div>
<div class="t" style="left:28.40px;top:425.55px;font-family:'Liberation Sans';font-size:8.9px;font-weight:normal;color:#e6e6e6;letter-spacing:0.000px;transform:scaleX(0.8532);transform-origin:0 0;">slot_3 : usp_rf_data_converter_0_m12_axis : Interface</div>
<div class="t" style="left:273.00px;top:425.55px;font-family:'Liberation Sans';font-size:8.9px;font-weight:normal;color:#ececec;letter-spacing:0.000px;transform:scaleX(0.8936);transform-origin:0 0;">Active</div>
<div class="t" style="left:28.40px;top:441.10px;font-family:'Liberation Sans';font-size:8.9px;font-weight:normal;color:#e6e6e6;letter-spacing:0.000px;transform:scaleX(0.8532);transform-origin:0 0;">slot_5 : usp_rf_data_converter_0_m22_axis : Interface</div>
<div class="t" style="left:273.00px;top:441.10px;font-family:'Liberation Sans';font-size:8.9px;font-weight:normal;color:#ececec;letter-spacing:0.000px;transform:scaleX(0.8936);transform-origin:0 0;">Active</div>
<div class="t" style="left:413.50px;top:70.60px;font-family:'Liberation Serif';font-size:7.5px;font-weight:bold;color:#d8d8d8;letter-spacing:0.017px;">140</div>
<div class="t" style="left:489.10px;top:70.60px;font-family:'Liberation Serif';font-size:7.5px;font-weight:bold;color:#d8d8d8;letter-spacing:0.017px;">160</div>
<div class="t" style="left:564.70px;top:70.60px;font-family:'Liberation Serif';font-size:7.5px;font-weight:bold;color:#d8d8d8;letter-spacing:0.017px;">180</div>
<div class="t" style="left:640.30px;top:70.60px;font-family:'Liberation Serif';font-size:7.5px;font-weight:bold;color:#d8d8d8;letter-spacing:0.017px;">200</div>
<div class="t" style="left:715.90px;top:70.60px;font-family:'Liberation Serif';font-size:7.5px;font-weight:bold;color:#d8d8d8;letter-spacing:0.017px;">220</div>
<div class="t" style="left:791.50px;top:70.60px;font-family:'Liberation Serif';font-size:7.5px;font-weight:bold;color:#d8d8d8;letter-spacing:0.017px;">240</div>
<div class="t" style="left:867.10px;top:70.60px;font-family:'Liberation Serif';font-size:7.5px;font-weight:bold;color:#d8d8d8;letter-spacing:0.017px;">260</div>
<div class="t" style="left:942.70px;top:70.60px;font-family:'Liberation Serif';font-size:7.5px;font-weight:bold;color:#d8d8d8;letter-spacing:0.017px;">280</div>
<div class="t" style="left:469.20px;top:55.60px;font-family:'Liberation Serif';font-size:7.5px;font-weight:bold;color:#000;letter-spacing:0.250px;">155</div>
<div class="t" style="left:922.80px;top:55.60px;font-family:'Liberation Serif';font-size:7.5px;font-weight:bold;color:#fff;letter-spacing:0.250px;">275</div>
<div class="t" style="left:949.00px;top:45.40px;font-family:'Liberation Serif';font-size:7.5px;font-weight:bold;color:#000;letter-spacing:0.417px;">284</div>
<div class="t" style="left:661.80px;top:119.40px;font-family:'Liberation Mono';font-size:7.2px;font-weight:bold;color:#000;letter-spacing:-0.048px;">Active</div>
<div class="t" style="left:649.80px;top:134.80px;font-family:'Liberation Mono';font-size:7.2px;font-weight:bold;color:#e8d8e8;letter-spacing:-0.141px;">Stream Beat</div>
<div class="t" style="left:661.80px;top:427.50px;font-family:'Liberation Mono';font-size:7.2px;font-weight:bold;color:#000;letter-spacing:-0.048px;">Active</div>
<div class="t" style="left:394.60px;top:437.60px;font-family:'Liberation Serif';font-size:7.5px;font-weight:bold;color:#000;letter-spacing:0.713px;">-140</div>
<div class="t" style="left:470.20px;top:437.60px;font-family:'Liberation Serif';font-size:7.5px;font-weight:bold;color:#000;letter-spacing:0.713px;">-120</div>
<div class="t" style="left:545.80px;top:437.60px;font-family:'Liberation Serif';font-size:7.5px;font-weight:bold;color:#000;letter-spacing:0.713px;">-100</div>
<div class="t" style="left:621.40px;top:437.60px;font-family:'Liberation Serif';font-size:7.5px;font-weight:bold;color:#000;letter-spacing:0.817px;">-80</div>
<div class="t" style="left:697.00px;top:437.60px;font-family:'Liberation Serif';font-size:7.5px;font-weight:bold;color:#000;letter-spacing:0.817px;">-60</div>
<div class="t" style="left:772.60px;top:437.60px;font-family:'Liberation Serif';font-size:7.5px;font-weight:bold;color:#000;letter-spacing:0.817px;">-40</div>
<div class="t" style="left:848.20px;top:437.60px;font-family:'Liberation Serif';font-size:7.5px;font-weight:bold;color:#000;letter-spacing:0.817px;">-20</div>
<div class="t" style="left:923.80px;top:437.60px;font-family:'Liberation Serif';font-size:7.5px;font-weight:bold;color:#000;letter-spacing:0.400px;">0</div>
<div class="t" style="left:469.40px;top:428.60px;font-family:'Liberation Serif';font-size:7.5px;font-weight:bold;color:#000;letter-spacing:0.938px;">-120</div>
<div class="t" style="left:957.60px;top:428.40px;font-family:'Liberation Serif';font-size:7.5px;font-weight:bold;color:#000;letter-spacing:0.000px;">9</div>
<div class="t" style="left:386.60px;top:468.60px;font-family:'Liberation Mono';font-size:7.2px;font-weight:bold;color:#f0f0f0;letter-spacing:-0.017px;">Updated at: 2023-Aug-08 17:54:45</div>
</body></html>
